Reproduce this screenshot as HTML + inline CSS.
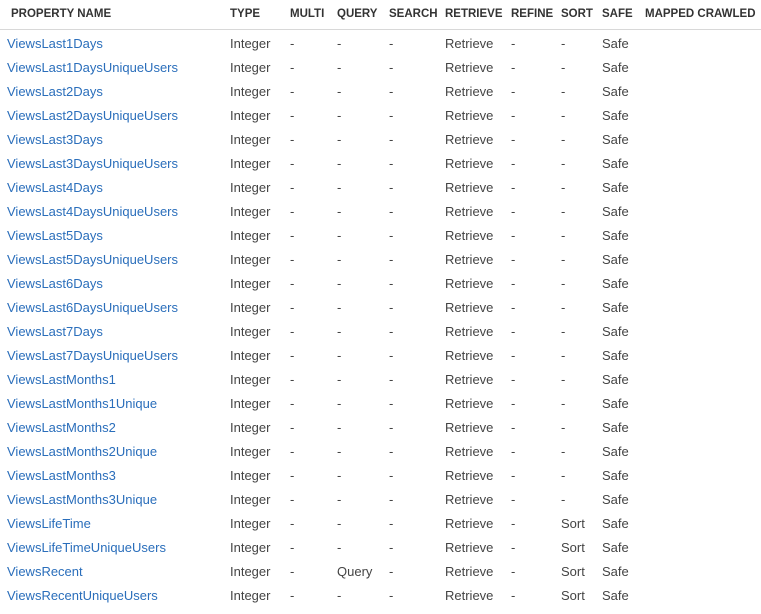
<!DOCTYPE html>
<html><head><meta charset="utf-8"><style>
body{margin:0;width:761px;height:614px;background:#fff;font-family:"Liberation Sans",sans-serif;overflow:hidden}
.h{position:absolute;top:0;left:0;width:761px;height:29px;border-bottom:1px solid #d8d8d8;font-size:11.5px;font-weight:bold;color:#333}
.h span{position:absolute;top:8px}
.r{position:absolute;left:0;width:761px;height:24px;font-size:13px;color:#444}
.r span{position:absolute;top:5px;white-space:nowrap}
.r span.n{color:#2a6ebb}
.n{left:7px}.t{left:230px}.m{left:290px}.q{left:337px}.s{left:389px}.re{left:445px}.f{left:511px}.so{left:561px}.sa{left:602px}.mc{left:645px}
.h .n{left:11px}
</style></head><body>
<div class="h"><span class="n">PROPERTY NAME</span><span class="t">TYPE</span><span class="m">MULTI</span><span class="q">QUERY</span><span class="s">SEARCH</span><span class="re">RETRIEVE</span><span class="f">REFINE</span><span class="so">SORT</span><span class="sa">SAFE</span><span class="mc">MAPPED CRAWLED</span></div>
<div id="rows"></div>
<script>
var names=["ViewsLast1Days","ViewsLast1DaysUniqueUsers","ViewsLast2Days","ViewsLast2DaysUniqueUsers","ViewsLast3Days","ViewsLast3DaysUniqueUsers","ViewsLast4Days","ViewsLast4DaysUniqueUsers","ViewsLast5Days","ViewsLast5DaysUniqueUsers","ViewsLast6Days","ViewsLast6DaysUniqueUsers","ViewsLast7Days","ViewsLast7DaysUniqueUsers","ViewsLastMonths1","ViewsLastMonths1Unique","ViewsLastMonths2","ViewsLastMonths2Unique","ViewsLastMonths3","ViewsLastMonths3Unique","ViewsLifeTime","ViewsLifeTimeUniqueUsers","ViewsRecent","ViewsRecentUniqueUsers"];
var h="";
for(var i=0;i<names.length;i++){
var sort=i>=20?"Sort":"-";var q=i==22?"Query":"-";
h+='<div class="r" style="top:'+(31+i*24)+'px"><span class="n">'+names[i]+'</span><span class="t">Integer</span><span class="m">-</span><span class="q">'+q+'</span><span class="s">-</span><span class="re">Retrieve</span><span class="f">-</span><span class="so">'+sort+'</span><span class="sa">Safe</span></div>';
}
document.getElementById("rows").innerHTML=h;
</script>
</body></html>
